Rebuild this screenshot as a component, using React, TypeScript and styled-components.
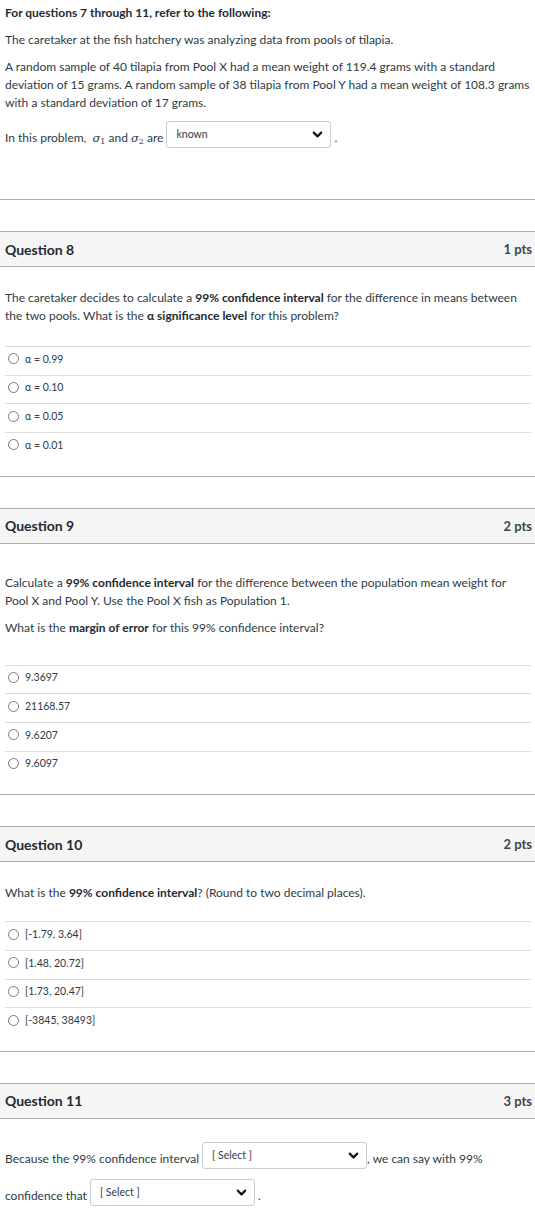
import React from "react"
import { createGlobalStyle, styled } from "styled-components"
import { ChevronDown } from "lucide-react"

const text = "#2d3b45"
const rule = "#aeaeae"
const light = "#dcdcdc"

const GlobalStyle = createGlobalStyle`
  html, body {
    margin: 0;
    padding: 0;
    background: #ffffff;
  }
  body {
    font-family: Lato, "Noto Sans", "Liberation Sans", sans-serif;
    color: ${ text };
  }
`

interface Option {
  label: React.ReactNode
}

interface QuestionData {
  title: string
  points: string
  padTop: number
  listGap: number
  paragraphs: React.ReactNode[]
  options: Option[]
}

const Select = ({ value, spaced }: { value: string, spaced?: boolean }) => (
  <StyledSelect $spaced={ spaced }>
    <StyledSelectLabel>{ value }</StyledSelectLabel>
    <StyledChevron>
      <ChevronDown size={ 15 } strokeWidth={ 3.4 } color="#111" />
    </StyledChevron>
  </StyledSelect>
)

const Answers = ({ options, gap }: { options: Option[], gap: number }) => (
  <StyledList $gap={ gap }>
    {
      options.map((o, i) =>
        <StyledAnswer key={ i }>
          <StyledRadio />
          <StyledAnswerText>{ o.label }</StyledAnswerText>
        </StyledAnswer>
      )
    }
  </StyledList>
)

const Header = ({ title, points }: { title: string, points: string }) => (
  <StyledHeader>
    <StyledTitle>{ title }</StyledTitle>
    <StyledPoints>{ points }</StyledPoints>
  </StyledHeader>
)

const alpha = (v: string) => <>α = { v }</>

const questions: QuestionData[] = [
  {
    title: "Question 8",
    points: "1 pts",
    padTop: 22,
    listGap: 21,
    paragraphs: [
      <>
        The caretaker decides to calculate a <b>99% confidence interval</b> for the difference in means between
        the two pools. What is the <b>α significance level</b> for this problem?
      </>
    ],
    options: ["0.99", "0.10", "0.05", "0.01"].map(v => ({ label: alpha(v) }))
  },
  {
    title: "Question 9",
    points: "2 pts",
    padTop: 30,
    listGap: 28,
    paragraphs: [
      <>
        Calculate a <b>99% confidence interval</b> for the difference between the population mean weight for
        Pool X and Pool Y. Use the Pool X fish as Population 1.
      </>,
      <>What is the <b>margin of error</b> for this 99% confidence interval?</>
    ],
    options: ["9.3697", "21168.57", "9.6207", "9.6097"].map(v => ({ label: v }))
  },
  {
    title: "Question 10",
    points: "2 pts",
    padTop: 22,
    listGap: 19,
    paragraphs: [
      <>What is the <b>99% confidence interval</b>? (Round to two decimal places).</>
    ],
    options: ["[-1.79, 3.64]", "[1.48, 20.72]", "[1.73, 20.47]", "[-3845, 38493]"].map(v => ({ label: v }))
  }
]

const App = () => {
  return (
    <StyledPage>
      <GlobalStyle />
      <StyledIntro>
        <StyledPara><b>For questions 7 through 11, refer to the following:</b></StyledPara>
        <StyledPara>The caretaker at the fish hatchery was analyzing data from pools of tilapia.</StyledPara>
        <StyledPara>
          A random sample of 40 tilapia from Pool X had a mean weight of 119.4 grams with a standard
          deviation of 15 grams. A random sample of 38 tilapia from Pool Y had a mean weight of 108.3 grams
          with a standard deviation of 17 grams.
        </StyledPara>
        <StyledPara $last>
          In this problem, &nbsp;<StyledMath>σ</StyledMath><StyledSub>1</StyledSub> and{ " " }
          <StyledMath>σ</StyledMath><StyledSub>2</StyledSub> are{ " " }
          <Select value="known" /> .
        </StyledPara>
      </StyledIntro>

      {
        questions.map(q =>
          <StyledQuestion key={ q.title }>
            <Header title={ q.title } points={ q.points } />
            <StyledBody $padTop={ q.padTop }>
              {
                q.paragraphs.map((p, i) =>
                  <StyledPara key={ i } $last={ i === q.paragraphs.length - 1 }>{ p }</StyledPara>
                )
              }
              <Answers options={ q.options } gap={ q.listGap } />
            </StyledBody>
          </StyledQuestion>
        )
      }

      <StyledQuestion $open>
        <Header title="Question 11" points="3 pts" />
        <StyledBody $padTop={ 18 }>
          <StyledPara $last>
            Because the 99% confidence interval <Select value="[ Select ]" spaced />, we can say with 99%
            confidence that <Select value="[ Select ]" spaced /> .
          </StyledPara>
        </StyledBody>
      </StyledQuestion>
    </StyledPage>
  )
}

const StyledPage = styled("div")`
  width: 535px;
  min-height: 1213px;
  background: #ffffff;
`

const StyledIntro = styled("div")`
  padding: 4px 4px 51px 5px;
  border-bottom: 1px solid ${ rule };
`

const StyledPara = styled("p")<{ $last?: boolean }>`
  margin: 0 0 ${ p => p.$last ? 0 : 9 }px;
  font-size: 12px;
  line-height: 18px;
  color: ${ text };
  b {
    font-weight: 700;
    color: #1f2a33;
  }
`

const StyledMath = styled("i")`
  font-family: "DejaVu Serif", "Liberation Serif", serif;
  font-size: 11.5px;
  font-style: italic;
`

const StyledSub = styled("sub")`
  font-family: "DejaVu Serif", "Liberation Serif", serif;
  font-size: 8px;
  line-height: 0;
  vertical-align: -2px;
`

const StyledSelect = styled("span")<{ $spaced?: boolean }>`
  display: inline-flex;
  justify-content: space-between;
  align-items: flex-start;
  box-sizing: border-box;
  width: 165px;
  height: 27px;
  margin: ${ p => p.$spaced ? "5px 0" : "0" };
  padding: 0 5px 0 9px;
  border: 1px solid #c7cdd1;
  border-radius: 3px;
  background: #ffffff;
  vertical-align: 4px;
`

const StyledSelectLabel = styled("span")`
  padding-top: 5px;
  font-size: 10.5px;
  line-height: 14px;
  color: ${ text };
`

const StyledChevron = styled("span")`
  display: flex;
  align-self: center;
`

const StyledQuestion = styled("div")<{ $open?: boolean }>`
  margin-top: 31px;
  border-top: 1px solid ${ rule };
  border-bottom: ${ p => p.$open ? "none" : `1px solid ${ rule }` };
`

const StyledHeader = styled("div")`
  display: flex;
  align-items: center;
  justify-content: space-between;
  height: 34px;
  padding: 0 3px 0 5px;
  background: #f5f5f5;
  border-bottom: 1px solid ${ rule };
`

const StyledTitle = styled("span")`
  font-size: 14px;
  font-weight: 700;
  color: #1f2a33;
`

const StyledPoints = styled("span")`
  font-size: 13px;
  font-weight: 700;
  color: #3a464f;
`

const StyledBody = styled("div")<{ $padTop: number }>`
  padding: ${ p => p.$padTop }px 4px 15px 5px;
`

const StyledList = styled("div")<{ $gap: number }>`
  margin-top: ${ p => p.$gap }px;
`

const StyledAnswer = styled("div")`
  display: flex;
  align-items: center;
  gap: 6px;
  box-sizing: border-box;
  height: 28.67px;
  padding: 0 0 4px 3px;
  border-top: 1px solid ${ light };
`

const StyledRadio = styled("span")`
  box-sizing: border-box;
  width: 11px;
  height: 11px;
  border: 1px solid #7b7b7b;
  border-radius: 50%;
  background: #ffffff;
`

const StyledAnswerText = styled("span")`
  font-size: 10.5px;
  line-height: 14px;
  color: ${ text };
`

export default App
